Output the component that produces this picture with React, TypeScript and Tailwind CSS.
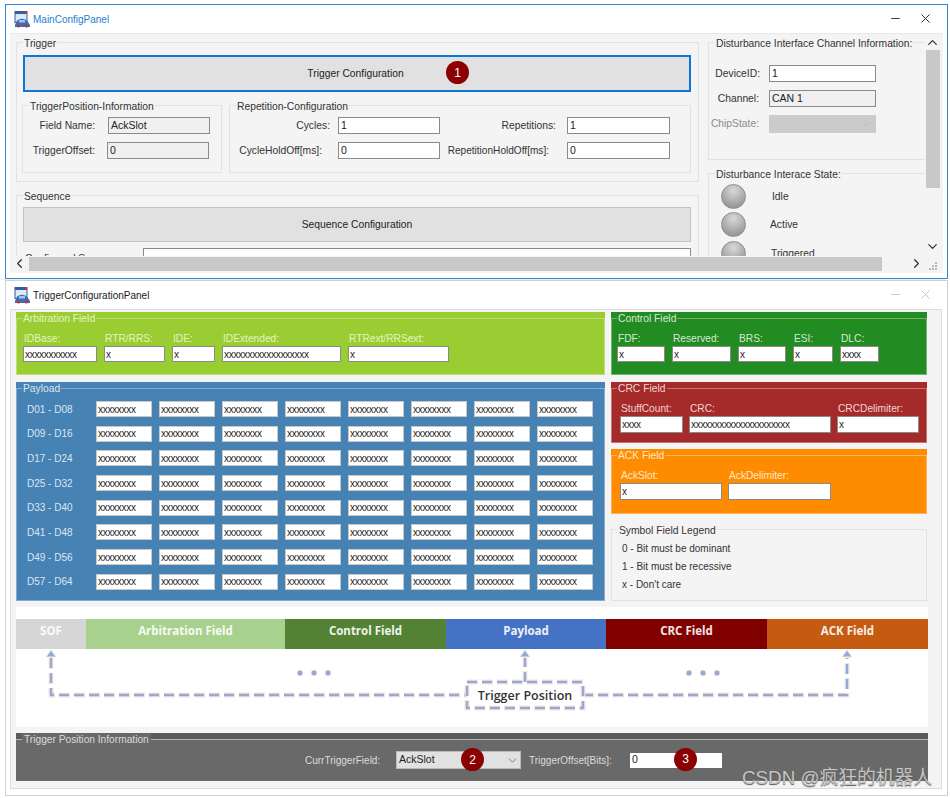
import type { ReactNode } from "react";
import { ChevronDown, ChevronLeft, ChevronRight, ChevronUp, Minus, X } from "lucide-react";

const FONT = "font-['Liberation_Sans',Arial,sans-serif]";

function AppIcon() {
  return (
    <svg width="17" height="17" viewBox="0 0 17 17" className="shrink-0">
      <rect x="1" y="0.5" width="12" height="11" fill="#dbe8f5" stroke="#2f5f9e" />
      <rect x="1" y="0.5" width="12" height="2.5" fill="#2f5f9e" />
      <rect x="11" y="0" width="2" height="3" fill="#c8342c" />
      <path d="M1 14 L3 9.5 Q8 6 13 9.5 L16 14 V16 H1 Z" fill="#3a6fb5" />
      <rect x="5" y="9" width="6" height="2.5" fill="#9fc4ea" />
      <circle cx="4.5" cy="15" r="1.6" fill="#c8342c" />
      <circle cx="12.5" cy="15" r="1.6" fill="#c8342c" />
    </svg>
  );
}

function TitleBar({ title, active }: { title: string; active?: boolean }) {
  return (
    <div className="flex h-[28px] items-center pl-[8px] pr-[14px]">
      <AppIcon />
      <span className={`ml-[2px] text-[10px] ${active ? "text-[#1c7fd0]" : "text-[#1a1a1a]"}`}>{title}</span>
      <div className={`mb-[1px] ml-auto flex items-center gap-[16px] ${active ? "text-[#333]" : "text-[#c8c8c8]"}`}>
        <Minus size={13} strokeWidth={1.8} />
        <X size={15} strokeWidth={1.6} />
      </div>
    </div>
  );
}

function Badge({ n, className }: { n: number; className: string }) {
  return (
    <span className={`absolute flex h-[23px] w-[23px] items-center justify-center rounded-full bg-[#8b0000] text-[12px] text-white ${className}`}>
      {n}
    </span>
  );
}

function Group({ label, className, children }: { label: string; className: string; children?: ReactNode }) {
  return (
    <div className={`relative border border-[#e2e2e2] ${className}`}>
      <span className="absolute left-[6px] top-[-6px] whitespace-nowrap bg-[#f4f4f4] px-[1px] text-[10.3px] leading-[13px] text-[#333]">{label}</span>
      {children}
    </div>
  );
}

function WinInput({ value, className, readOnly }: { value: string; className: string; readOnly?: boolean }) {
  return (
    <div className={`flex h-[17px] shrink-0 items-center border border-[#8a8a8a] pl-[2px] text-[10.5px] text-[#222] ${readOnly ? "bg-[#f0f0f0]" : "bg-white"} ${className}`}>
      {value}
    </div>
  );
}

function LedRow({ label, indent }: { label: string; indent: string }) {
  return (
    <div className="flex h-[28.5px] shrink-0 items-center pl-[12px]">
      <span className="h-[25px] w-[25px] shrink-0 rounded-full border border-[#8f8f8f] bg-[radial-gradient(circle_at_50%_25%,#d8d8d8,#ababab_55%,#858585)]" />
      <span className={`text-[10.3px] text-[#333] ${indent}`}>{label}</span>
    </div>
  );
}

function MainConfigPanel() {
  return (
    <div className="mx-[5px] mt-[4px] h-[275px] w-[943px] border border-[#2b8ad8] bg-white">
      <TitleBar title="MainConfigPanel" active />
      <div className="ml-[4px] h-[240px] w-[933px] border-t border-[#e8e8e8] bg-[#f4f4f4]">
        <div className="flex h-[222px]">
          <div className="flex h-full w-[915px] overflow-hidden pl-[6px] pt-[8px]">
            <div className="flex w-[683px] shrink-0 flex-col gap-[13px]">
              <Group label="Trigger" className="h-[140px] shrink-0 pl-[6px] pt-[12px]">
                <div className="relative flex h-[37px] w-[668px] items-center justify-center border-2 border-[#0a78d4] bg-[#e1e1e1] pr-[3px] text-[10.3px] text-[#222]">
                  Trigger Configuration
                  <Badge n={1} className="left-[421px] top-[4px]" />
                </div>
                <div className="-ml-[1px] mt-[13px] flex gap-[7px]">
                  <Group label="TriggerPosition-Information" className="h-[68px] w-[200px] pl-[1px] pt-[11px]">
                    <div className="flex items-center">
                      <span className="w-[71px] text-right text-[10.3px] text-[#333]">Field Name:</span>
                      <WinInput value="AckSlot" readOnly className="ml-[13px] w-[102px]" />
                    </div>
                    <div className="mt-[8px] flex items-center">
                      <span className="w-[71px] text-right text-[10.3px] text-[#333]">TriggerOffset:</span>
                      <WinInput value="0" readOnly className="ml-[12px] w-[102px]" />
                    </div>
                  </Group>
                  <Group label="Repetition-Configuration" className="h-[68px] w-[462px] pt-[11px]">
                    <div className="flex items-center">
                      <span className="w-[100px] text-right text-[10.3px] text-[#333]">Cycles:</span>
                      <WinInput value="1" className="ml-[8px] w-[102px]" />
                      <span className="w-[116px] text-right text-[10.3px] text-[#333]">Repetitions:</span>
                      <WinInput value="1" className="ml-[11px] w-[103px]" />
                    </div>
                    <div className="mt-[8px] flex items-center">
                      <span className="w-[92px] text-right text-[10.3px] text-[#333]">CycleHoldOff[ms]:</span>
                      <WinInput value="0" className="ml-[16px] w-[102px]" />
                      <span className="w-[109px] whitespace-nowrap text-right text-[10.1px] text-[#333]">RepetitionHoldOff[ms]:</span>
                      <WinInput value="0" className="ml-[18px] w-[103px]" />
                    </div>
                  </Group>
                </div>
              </Group>
              <Group label="Sequence" className="h-[120px] shrink-0 pl-[6px] pt-[11px]">
                <div className="flex h-[35px] w-[668px] items-center justify-center border border-[#c4c4c4] bg-[#e1e1e1] text-[10.3px] text-[#222]">
                  Sequence Configuration
                </div>
                <div className="mt-[6px] flex items-start">
                  <span className="ml-[2px] mt-[3px] w-[118px] text-[10.3px] text-[#333]">Configured Sequence</span>
                  <div className="h-[17px] w-[548px] border border-[#8a8a8a] bg-white" />
                </div>
              </Group>
            </div>
            <div className="ml-[9px] flex w-[218px] shrink-0 flex-col gap-[13px]">
              <Group label="Disturbance Interface Channel Information:" className="h-[118px] shrink-0 border-r-0">
                <div className="flex flex-col pt-[22px]">
                  <div className="flex items-center">
                    <span className="w-[51px] text-right text-[10.3px] text-[#333]">DeviceID:</span>
                    <WinInput value="1" className="ml-[9px] w-[107px]" />
                  </div>
                  <div className="mt-[8px] flex items-center">
                    <span className="w-[50px] text-right text-[10.3px] text-[#333]">Channel:</span>
                    <WinInput value="CAN 1" readOnly className="ml-[10px] w-[107px]" />
                  </div>
                  <div className="mt-[8px] flex items-center">
                    <span className="w-[50px] text-right text-[10.3px] text-[#8c8c8c]">ChipState:</span>
                    <div className="ml-[10px] flex h-[18px] w-[107px] items-center justify-end bg-[#cbcbcb] pr-[3px] text-[#b0b0b0]">
                      <ChevronDown size={13} strokeWidth={1.2} />
                    </div>
                  </div>
                </div>
              </Group>
              <Group label="Disturbance Interace State:" className="h-[90px] shrink-0 border-b-0 border-r-0 pt-[8px]">
                <LedRow label="Idle" indent="ml-[26px]" />
                <LedRow label="Active" indent="ml-[24px]" />
                <LedRow label="Triggered" indent="ml-[25px]" />
              </Group>
            </div>
          </div>
          {/* vertical scrollbar */}
          <div className="flex h-full w-[15px] shrink-0 flex-col items-center pt-[1px] text-[#333]">
            <ChevronUp size={15} strokeWidth={2} className="shrink-0" />
            <div className="h-[138px] w-[14px] shrink-0 bg-[#c8c8c8]" />
            <ChevronDown size={15} strokeWidth={2} className="mt-auto mb-[2px] shrink-0" />
          </div>
        </div>
        {/* horizontal scrollbar */}
        <div className="flex h-[15px] items-center text-[#333]">
          <ChevronLeft size={15} strokeWidth={2} className="ml-[2px] shrink-0" />
          <div className="ml-[2px] h-[14px] w-[853px] shrink-0 bg-[#c8c8c8]" />
          <ChevronRight size={15} strokeWidth={2} className="ml-[27px] shrink-0" />
          <div className="ml-[5px] mt-[5px] grid grid-cols-3 gap-[1px]">
            {[0, 1, 2, 3, 4, 5, 6, 7, 8].map((i) => (
              <span key={i} className={`h-[2px] w-[2px] ${i === 0 || i === 1 || i === 3 ? "bg-transparent" : "bg-[#b5b5b5]"}`} />
            ))}
          </div>
        </div>
      </div>
    </div>
  );
}

type Column = { label: string; width: string; value?: string };

function FieldRow({ columns, inputH, labelClass }: { columns: Column[]; inputH: string; labelClass: string }) {
  return (
    <div className="flex">
      {columns.map((c) => (
        <div key={c.label} className={`flex flex-col ${c.width}`}>
          <span className={`h-[14px] whitespace-nowrap pl-[1px] text-[10.2px] leading-[13px] ${labelClass}`}>{c.label}</span>
          <div className={`flex items-center border border-[#8a8a8a] bg-white pl-[1px] text-[10px] tracking-[-0.3px] text-[#222] ${inputH}`}>
            {c.value}
          </div>
        </div>
      ))}
    </div>
  );
}

function Panel({ label, className, labelClass, children }: { label: string; className: string; labelClass: string; children: ReactNode }) {
  return (
    <div className={`relative ${className}`}>
      <div className="pointer-events-none absolute inset-x-0 bottom-0 top-[6px] border border-white/35" />
      <span className={`absolute left-[6px] top-0 px-[1px] text-[10.3px] leading-[13px] ${labelClass}`}>{label}</span>
      {children}
    </div>
  );
}

const PAYLOAD_ROWS = ["D01 - D08", "D09 - D16", "D17 - D24", "D25 - D32", "D33 - D40", "D41 - D48", "D49 - D56", "D57 - D64"];

function Dashes({ d }: { d: string }) {
  return (
    <>
      <path d={d} fill="none" stroke="#fbe5d6" strokeWidth="5" strokeDasharray="11 4" />
      <path d={d} fill="none" stroke="#8faadc" strokeWidth="2.5" strokeDasharray="10 5" />
    </>
  );
}

function PositionDiagram() {
  const arrows = [51, 525, 847];
  const dots = [300, 314, 328, 689, 703, 717];
  return (
    <svg width="912" height="78" viewBox="16 649 912 78" className="block">
      <Dashes d="M51 658 V695 H467" />
      <Dashes d="M583 695 H847 V658" />
      <Dashes d="M525 682 V658" />
      <rect x="467" y="682" width="116" height="26" fill="#fff" stroke="#fbe5d6" strokeWidth="5" strokeDasharray="11 4" />
      <rect x="467" y="682" width="116" height="26" fill="none" stroke="#8faadc" strokeWidth="2.5" strokeDasharray="10 5" />
      {arrows.map((x) => (
        <path key={x} d={`M${x} 650 L${x + 5} 657 H${x - 5} Z`} fill="#8faadc" stroke="#fbe5d6" strokeWidth="1" />
      ))}
      {dots.map((x) => (
        <circle key={x} cx={x} cy="673" r="3" fill="#8faadc" stroke="#fbe5d6" strokeWidth="1" />
      ))}
      <text x="525" y="700" textAnchor="middle" fontSize="12.5" fontWeight="600" fontFamily="'Open Sans',sans-serif" fill="#333">
        Trigger Position
      </text>
    </svg>
  );
}

const FIELD_CELL = "flex items-center justify-center pb-[6px] text-[11.5px] font-bold text-white/90 font-['Open_Sans',sans-serif]";

function TriggerConfigurationPanel() {
  return (
    <div className="mx-[5px] h-[516px] w-[943px] border border-[#d0d0d0] bg-white">
      <TitleBar title="TriggerConfigurationPanel" />
      <div className="ml-[4px] h-[480px] w-[932px] border border-[#dcdcdc] bg-[#f4f4f4] pl-[5px] pt-[2px]">
        <div className="flex gap-[6px]">
          <div className="flex w-[589px] shrink-0 flex-col gap-[7px]">
            <Panel label="Arbitration Field" className="h-[63px] bg-[#9acd32] pl-[7px] pt-[20px]" labelClass="bg-[#9acd32] text-[#e6f3c4]">
              <FieldRow
                inputH="h-[16px]"
                labelClass="text-[#e6f3c4]"
                columns={[
                  { label: "IDBase:", width: "w-[74px] mr-[7px]", value: "xxxxxxxxxxx" },
                  { label: "RTR/RRS:", width: "w-[61px] mr-[7px]", value: "x" },
                  { label: "IDE:", width: "w-[43px] mr-[7px]", value: "x" },
                  { label: "IDExtended:", width: "w-[119px] mr-[7px]", value: "xxxxxxxxxxxxxxxxxx" },
                  { label: "RTRext/RRSext:", width: "w-[101px]", value: "x" },
                ]}
              />
            </Panel>
            <Panel label="Payload" className="h-[219px] bg-[#4682b4] pl-[11px] pt-[19px]" labelClass="bg-[#4682b4] text-[#dbe6f0]">
              <div className="flex flex-col gap-y-[8.7px]">
                {PAYLOAD_ROWS.map((row) => (
                  <div key={row} className="flex h-[16px] items-center">
                    <span className="w-[69px] text-[10px] text-[#dbe6f0]">{row}</span>
                    <div className="flex gap-[7px]">
                      {[1, 2, 3, 4, 5, 6, 7, 8].map((cell) => (
                        <div key={cell} className="flex h-[16px] w-[56px] items-center border border-[#c8c8c8] bg-white pl-[1px] text-[10px] tracking-[-0.3px] text-[#222]">
                          xxxxxxxx
                        </div>
                      ))}
                    </div>
                  </div>
                ))}
              </div>
            </Panel>
          </div>
          <div className="flex w-[316px] shrink-0 flex-col">
            <Panel label="Control Field" className="h-[63px] bg-[#228b22] pl-[6px] pt-[20px]" labelClass="bg-[#228b22] text-[#d4ead4]">
              <FieldRow
                inputH="h-[16px]"
                labelClass="text-[#d4ead4]"
                columns={[
                  { label: "FDF:", width: "w-[48px] mr-[7px]", value: "x" },
                  { label: "Reserved:", width: "w-[59px] mr-[7px]", value: "x" },
                  { label: "BRS:", width: "w-[48px] mr-[7px]", value: "x" },
                  { label: "ESI:", width: "w-[40px] mr-[7px]", value: "x" },
                  { label: "DLC:", width: "w-[39px]", value: "xxxx" },
                ]}
              />
            </Panel>
            <Panel label="CRC Field" className="mt-[7px] h-[61px] bg-[#a52a2a] pl-[9px] pt-[20px]" labelClass="bg-[#a52a2a] text-[#f0d4d4]">
              <FieldRow
                inputH="h-[17px]"
                labelClass="text-[#f0d4d4]"
                columns={[
                  { label: "StuffCount:", width: "w-[63px] mr-[6px]", value: "xxxx" },
                  { label: "CRC:", width: "w-[142px] mr-[6px]", value: "xxxxxxxxxxxxxxxxxxxxx" },
                  { label: "CRCDelimiter:", width: "w-[82px]", value: "x" },
                ]}
              />
            </Panel>
            <Panel label="ACK Field" className="mt-[6px] h-[65px] bg-[#ff8c00] pl-[9px] pt-[20px]" labelClass="bg-[#ff8c00] text-[#ffe8c8]">
              <FieldRow
                inputH="h-[17px]"
                labelClass="text-[#ffe8c8]"
                columns={[
                  { label: "AckSlot:", width: "w-[102px] mr-[6px]", value: "x" },
                  { label: "AckDelimiter:", width: "w-[103px]" },
                ]}
              />
            </Panel>
            <Group label="Symbol Field Legend" className="mt-[15px] h-[72px] pl-[10px] pt-[12px]">
              <div className="flex flex-col gap-[5px] text-[10px] leading-[13px] text-[#333]">
                <span>0 - Bit must be dominant</span>
                <span>1 - Bit must be recessive</span>
                <span>x - Don't care</span>
              </div>
            </Group>
          </div>
        </div>
        <div className="mt-[6px] h-[120px] w-[912px] bg-white pt-[12px]">
          <div className="flex h-[30px]">
            <div className={`w-[70px] bg-[#d6d6d6] ${FIELD_CELL}`}>SOF</div>
            <div className={`w-[199px] bg-[#a9d18e] ${FIELD_CELL}`}>Arbitration Field</div>
            <div className={`w-[161px] bg-[#548235] ${FIELD_CELL}`}>Control Field</div>
            <div className={`w-[160px] bg-[#4472c4] ${FIELD_CELL}`}>Payload</div>
            <div className={`w-[161px] bg-[#800000] ${FIELD_CELL}`}>CRC Field</div>
            <div className={`w-[161px] bg-[#c55a11] ${FIELD_CELL}`}>ACK Field</div>
          </div>
          <PositionDiagram />
        </div>
        <div className="relative mt-[6px] h-[48px] w-[912px] bg-[#696969] pt-[18px]">
          <div className="absolute inset-x-0 top-0 h-[6px] bg-[#5a5a5a]" />
          <div className="absolute inset-x-0 top-[6px] h-px bg-[#b5b5b5]" />
          <span className="absolute left-[6px] top-0 bg-[#696969] px-[2px] text-[10.2px] leading-[13px] text-[#dcdcdc]">Trigger Position Information</span>
          <div className="flex items-center text-[10px] text-[#dcdcdc]">
            <span className="ml-[289px] w-[91px]">CurrTriggerField:</span>
            <div className="relative flex h-[18px] w-[125px] items-center border border-[#bbb] bg-[#e1e1e1] pl-[2px] text-[10.5px] text-[#222]">
              AckSlot
              <ChevronDown size={13} strokeWidth={1.3} className="ml-auto mr-[1px] text-[#555]" />
              <Badge n={2} className="left-[64px] top-[-4px]" />
            </div>
            <span className="ml-[8px] w-[101px]">TriggerOffset[Bits]:</span>
            <div className="relative flex h-[15px] w-[92px] items-center bg-white pl-[2px] text-[10.5px] text-[#222]">
              0
              <Badge n={3} className="left-[44px] top-[-5px]" />
            </div>
          </div>
        </div>
      </div>
    </div>
  );
}

export default function App() {
  return (
    <div className={`relative h-[798px] w-[950px] overflow-hidden bg-white ${FONT}`}>
      <MainConfigPanel />
      <div className="h-px w-[945px] bg-[#f0f0f0]" />
      <TriggerConfigurationPanel />
      {/* blog watermark over the screenshot */}
      <span className="absolute left-[742px] top-[765px] whitespace-nowrap text-[18.8px] leading-[26px] text-[#c4c4c4] [text-shadow:0_1px_1px_#555] font-['Liberation_Sans','Noto_Sans_CJK_SC',sans-serif]">
        CSDN @疯狂的机器人
      </span>
    </div>
  );
}
